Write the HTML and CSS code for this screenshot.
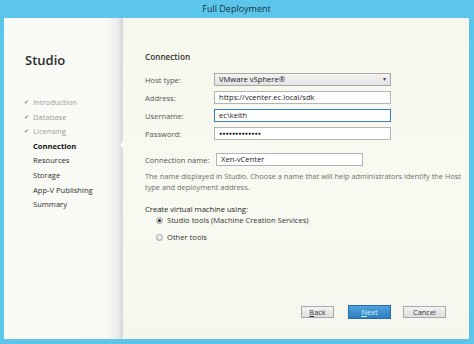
FILE: index.html
```html
<!DOCTYPE html>
<html lang="en">
<head>
    <meta charset="UTF-8">
    <title>Full Deployment</title>
    <link rel="stylesheet" href="styles.css">
</head>
<body>
    <div class="window">
        <div class="titlebar">Full Deployment</div>
        <div class="frame">
            <div class="sidebar">
                <h1>Studio</h1>
                <ul class="steps">
                    <li class="done"><span class="check">&#10004;</span>Introduction</li>
                    <li class="done"><span class="check">&#10004;</span>Database</li>
                    <li class="done"><span class="check">&#10004;</span>Licensing</li>
                    <li class="current">Connection</li>
                    <li>Resources</li>
                    <li>Storage</li>
                    <li>App-V Publishing</li>
                    <li>Summary</li>
                </ul>
                <span class="notch"></span>
            </div>
            <div class="main">
                <h2>Connection</h2>
                <div class="row">
                    <label>Host type:</label>
                    <div class="field select">VMware vSphere&reg;<span class="arrow">&#9662;</span></div>
                </div>
                <div class="row">
                    <label>Address:</label>
                    <div class="field">https://vcenter.ec.local/sdk</div>
                </div>
                <div class="row">
                    <label>Username:</label>
                    <div class="field focus">ec\keith</div>
                </div>
                <div class="row">
                    <label>Password:</label>
                    <div class="field dots">&#9679;&#9679;&#9679;&#9679;&#9679;&#9679;&#9679;&#9679;&#9679;&#9679;&#9679;&#9679;&#9679;</div>
                </div>
                <div class="row name-row">
                    <label>Connection name:</label>
                    <div class="field short">Xen-vCenter</div>
                </div>
                <p class="hint">The name displayed in Studio. Choose a name that will help administrators identify the Host type and deployment address.</p>
                <div class="group-title">Create virtual machine using:</div>
                <div class="radio checked"><span class="dot"></span>Studio tools (Machine Creation Services)</div>
                <div class="radio"><span class="dot"></span>Other tools</div>
                <div class="buttons">
                    <button class="btn"><u>B</u>ack</button>
                    <button class="btn primary"><u>N</u>ext</button>
                    <button class="btn cancel">Cancel</button>
                </div>
            </div>
        </div>
    </div>
</body>
</html>
```

FILE: styles.css
```css
body {
    margin: 0;
    font-family: "Open Sans", "Noto Sans", sans-serif;
    background-color: #5cc6ea;
}
.window {
    width: 474px;
    height: 344px;
    background-color: #5cc6ea;
    padding: 0 5px 5px 4px;
    box-sizing: border-box;
    display: flex;
    flex-direction: column;
}
.titlebar {
    height: 18px;
    line-height: 18px;
    text-align: center;
    font-size: 9px;
    color: #17324a;
}
.frame {
    flex: 1;
    display: flex;
    background: linear-gradient(180deg, #f6f7ec 0%, #f8f9f1 60%, #f5f7ee 100%);
}
.sidebar {
    width: 119px;
    position: relative;
    background: linear-gradient(90deg, #fafaf6 0%, #f9f9f5 85%, #ececeb 95%, #d6d6d8 100%);
    box-sizing: border-box;
    padding-left: 21px;
}
.sidebar h1 {
    margin: 32px 0 0 0;
    font-size: 13px;
    font-weight: 600;
    color: #2b2b2b;
    line-height: 20px;
}
.steps {
    list-style: none;
    margin: 25px 0 0 0;
    padding: 0;
}
.steps li {
    font-size: 7.6px;
    line-height: 14.6px;
    color: #2d2d2d;
    padding-left: 8px;
    position: relative;
}
.steps li.done {
    color: #9a9a9a;
}
.steps li.current {
    font-weight: 700;
    color: #111;
}
.check {
    position: absolute;
    left: -1px;
    font-size: 6px;
    color: #8a8a8a;
}
.notch {
    position: absolute;
    right: -1px;
    top: 123px;
    width: 0;
    height: 0;
    border-top: 4px solid transparent;
    border-bottom: 4px solid transparent;
    border-right: 4px solid #ffffff;
}
.main {
    flex: 1;
    padding: 0 0 0 22px;
    display: flex;
    flex-direction: column;
}
.main h2 {
    margin: 33px 0 0 0;
    font-size: 8.2px;
    font-weight: 600;
    color: #333;
    line-height: 12px;
}
.row {
    display: flex;
    align-items: center;
    height: 13px;
    margin-top: 5px;
    font-size: 7.6px;
}
.main h2 + .row {
    margin-top: 10px;
}
.row label {
    width: 69px;
    color: #555;
}
.field {
    width: 177px;
    height: 13px;
    box-sizing: border-box;
    border: 1px solid #b4b4b4;
    background-color: #fff;
    padding-left: 4px;
    line-height: 11px;
    color: #222;
    display: flex;
    align-items: center;
}
.field.select {
    background: linear-gradient(180deg, #f4f4f4, #e2e2e2);
    border-color: #a8a8a8;
    justify-content: space-between;
}
.arrow {
    font-size: 6px;
    padding-right: 4px;
    color: #444;
}
.field.focus {
    border-color: #3b7bbf;
}
.field.dots {
    font-size: 5px;
    letter-spacing: 0.2px;
    color: #111;
}
.name-row {
    margin-top: 13px;
}
.name-row label {
    width: 71px;
}
.field.short {
    width: 147px;
}
.hint {
    margin: 5px 0 0 0;
    font-size: 7.4px;
    line-height: 11px;
    color: #6f6f6f;
    width: 320px;
}
.group-title {
    margin-top: 10px;
    font-size: 7.6px;
    color: #222;
    line-height: 12px;
}
.radio {
    display: flex;
    align-items: center;
    font-size: 7.6px;
    color: #333;
    line-height: 12px;
    margin: -1px 0 0 11px;
}
.radio + .radio {
    margin-top: 5px;
}
.dot {
    width: 7px;
    height: 7px;
    border-radius: 50%;
    border: 1px solid #a0a0a0;
    background: linear-gradient(180deg, #f4f4f4, #dcdcdc);
    margin-right: 4px;
    box-sizing: border-box;
    display: flex;
    align-items: center;
    justify-content: center;
}
.radio.checked .dot::after {
    content: "";
    width: 3px;
    height: 3px;
    border-radius: 50%;
    background-color: #222;
}
.buttons {
    margin-top: auto;
    margin-bottom: 20px;
    display: flex;
    align-items: center;
    padding-left: 156px;
}
.btn {
    font-family: inherit;
    font-size: 7.4px;
    width: 33px;
    height: 12px;
    padding: 0;
    border: 1px solid #a9a9a9;
    background: linear-gradient(180deg, #f3f3f3, #dddddd);
    color: #333;
    line-height: 10px;
}
.btn.primary {
    width: 43px;
    height: 14px;
    margin-left: 14px;
    border-color: #2a6aa8;
    background: linear-gradient(180deg, #4fa3dc, #2d7ec2);
    color: #dff1ff;
}
.btn.cancel {
    width: 43px;
    margin-left: 12px;
}
.btn u {
    text-decoration: underline;
}
```
